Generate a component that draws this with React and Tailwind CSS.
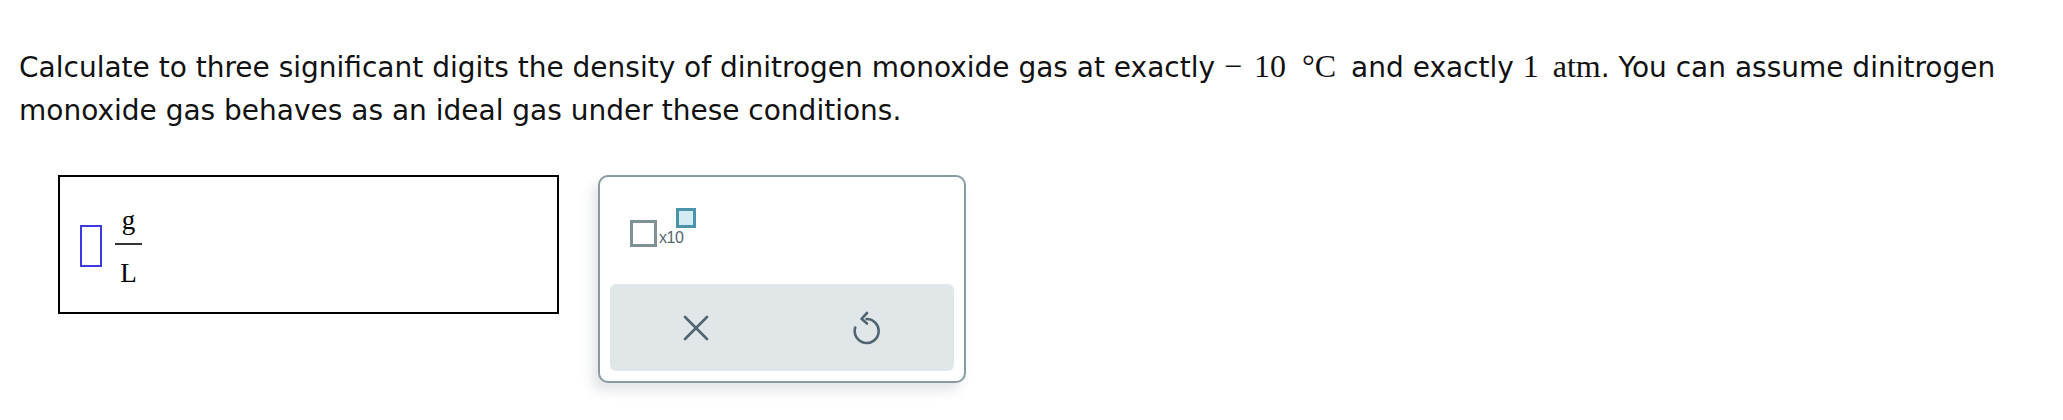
const sans = { fontFamily: '"DejaVu Sans", Verdana, sans-serif' }

function MathText({ children, className = '' }) {
  return (
    <span className={`font-['Liberation_Serif','Times_New_Roman',serif] ${className}`}>{children}</span>
  )
}

function Fraction() {
  return (
    <div className="flex flex-col items-center font-['Liberation_Serif','Times_New_Roman',serif] text-[27px] leading-none text-black mt-[5px]">
      <span className="pb-[9px]">g</span>
      <span className="block w-[27px] h-[2px] bg-[#333]" />
      <span className="pt-[15px]">L</span>
    </div>
  )
}

function UndoIcon() {
  return (
    <svg width="30" height="36" viewBox="0 0 30 36" fill="none" stroke="#4f6670" strokeWidth="2.6" strokeLinecap="round" strokeLinejoin="round">
      <path d="M13.5 9 A12 12 0 1 1 2.2 17.5" />
      <path d="M14 3 L8.5 8.8 L14 13.5" />
    </svg>
  )
}

function CloseIcon() {
  return (
    <svg width="26" height="26" viewBox="0 0 26 26" fill="none" stroke="#4f6670" strokeWidth="2.6" strokeLinecap="round">
      <path d="M2 2 L24 24" />
      <path d="M24 2 L2 24" />
    </svg>
  )
}

export default function App() {
  return (
    <div className="w-[2063px] h-[420px] bg-white text-black overflow-hidden">
      <div className="pl-[19px] pt-[45px] text-[28px] leading-[43px] text-[#111]" style={sans}>
        <p className="whitespace-nowrap">
          Calculate to three significant digits the density of dinitrogen monoxide gas at exactly{' '}
          <MathText className="text-[32px]">
            −<span className="ml-[12px]">10</span>
            <span className="ml-[16px] mr-[6px]">°C</span>
          </MathText>{' '}
          and exactly{' '}
          <MathText className="text-[32px]">
            1<span className="ml-[14px]">atm</span>
          </MathText>
          . You can assume dinitrogen
        </p>
        <p className="whitespace-nowrap">monoxide gas behaves as an ideal gas under these conditions.</p>
      </div>

      <div className="flex items-start gap-[39px] pl-[58px] mt-[43px]">
        {/* answer field */}
        <div className="w-[501px] h-[139px] border-2 border-black flex items-center gap-[13px] pl-[20px]">
          <div className="w-[22px] h-[42px] border-2 border-[#3a3ae0] mt-[3px]" />
          <Fraction />
        </div>

        {/* keypad panel */}
        <div className="w-[368px] h-[208px] rounded-[10px] border-2 border-[#8a9aa1] bg-white shadow-[-6px_8px_12px_rgba(60,80,90,0.14)] flex flex-col">
          <div className="flex-1 pl-[30px] pt-[31px]">
            <div className="flex items-start">
              <div className="w-[27px] h-[27px] border-[3px] border-[#7f9096] mt-[12px]" />
              <span className="self-end text-[16px] leading-none text-[#55656b] ml-[2px] mb-[1px] font-['Liberation_Sans',Arial,sans-serif] tracking-[-0.5px]">
                x10
              </span>
              <div className="w-[20px] h-[20px] border-[3px] border-[#4a93a9] bg-[#d3ebf2] -ml-[7px]" />
            </div>
          </div>
          <div className="mx-[10px] mb-[10px] h-[87px] rounded-[6px] bg-[#e1e6e9] flex">
            <div className="flex-1 flex items-center justify-center">
              <CloseIcon />
            </div>
            <div className="flex-1 flex items-center justify-center">
              <UndoIcon />
            </div>
          </div>
        </div>
      </div>
    </div>
  )
}
